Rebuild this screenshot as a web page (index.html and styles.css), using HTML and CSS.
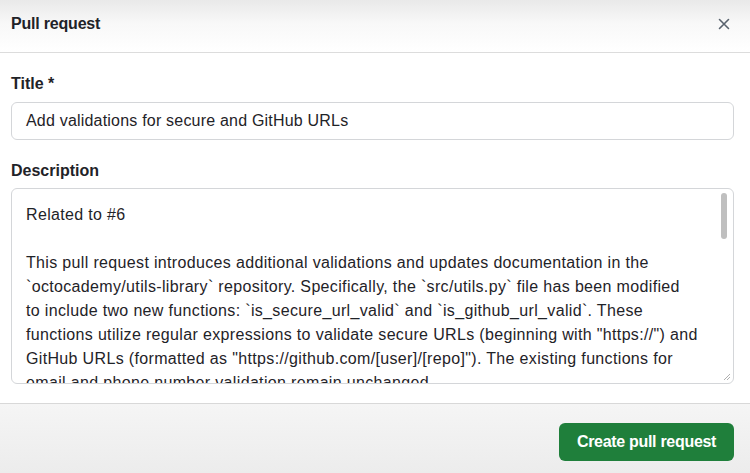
FILE: index.html
```html
<!DOCTYPE html>
<html lang="en">
<head>
    <meta charset="UTF-8">
    <title>Pull request</title>
    <link rel="stylesheet" href="styles.css">
</head>
<body>
    <div class="dialog">
        <div class="dialog-header">
            <h2>Pull request</h2>
            <button class="close" aria-label="Close">
                <svg width="16" height="16" viewBox="0 0 16 16"><path d="M3.5 3.5l9 9M12.5 3.5l-9 9" stroke="#59636e" stroke-width="1.6" stroke-linecap="round"/></svg>
            </button>
        </div>

        <div class="dialog-body">
            <label class="field-label">Title *</label>
            <div class="input">Add validations for secure and GitHub URLs</div>

            <label class="field-label desc-label">Description</label>
            <div class="textarea">
                <div class="textarea-text">Related to #6

This pull request introduces additional validations and updates documentation in the
`octocademy/utils-library` repository. Specifically, the `src/utils.py` file has been modified
to include two new functions: `is_secure_url_valid` and `is_github_url_valid`. These
functions utilize regular expressions to validate secure URLs (beginning with "https://") and
GitHub URLs (formatted as "https://github.com/[user]/[repo]"). The existing functions for
email and phone number validation remain unchanged.</div>
                <div class="scroll-thumb"></div>
                <svg class="grip" width="8" height="8" viewBox="0 0 8 8"><path d="M7 1L1 7M7 4L4 7" stroke="#b0b0b0" stroke-width="1"/></svg>
            </div>
        </div>

        <div class="dialog-footer">
            <button class="btn-primary">Create pull request</button>
        </div>
    </div>
</body>
</html>
```

FILE: styles.css
```css
* { margin: 0; padding: 0; box-sizing: border-box; }
body { font-family: "Liberation Sans", Arial, sans-serif; color: #1f2328; background: #fff; width: 750px; height: 473px; overflow: hidden; }
.dialog { display: flex; flex-direction: column; height: 473px; }
.dialog-header { height: 53px; display: flex; align-items: center; justify-content: space-between; padding: 0 18px 4px 11px; background: linear-gradient(180deg, #e9e9e9 0%, #f8f8f8 45%, #ffffff 100%); border-bottom: 1px solid #dcdcdc; }
.dialog-header h2 { font-size: 16px; font-weight: bold; letter-spacing: -0.2px; }
.close { background: none; border: none; display: flex; }
.dialog-body { padding: 19px 16px 0 11px; flex: 1; }
.field-label { display: block; font-size: 16px; font-weight: bold; line-height: 24px; margin-bottom: 6px; }
.desc-label { margin-top: 19px; margin-bottom: 5px; }
.input { height: 38px; border: 1px solid #d4d6d9; border-radius: 6px; padding: 0 14px; font-size: 16px; line-height: 36px; letter-spacing: 0.2px; }
.textarea { position: relative; height: 196px; border: 1px solid #d4d6d9; border-radius: 6px; overflow: hidden; padding: 14px 14px 0; }
.textarea-text { white-space: pre-line; font-size: 16px; line-height: 24px; letter-spacing: 0.34px; }
.scroll-thumb { position: absolute; top: 4px; right: 6px; width: 6px; height: 46px; border-radius: 3px; background: #bfbfbf; }
.grip { position: absolute; right: 2px; bottom: 2px; }
.dialog-footer { height: 70px; display: flex; justify-content: flex-end; align-items: flex-start; padding: 19px 16px 0; border-top: 1px solid #d8d8d8; background: linear-gradient(180deg, #f5f5f5 0%, #ececec 100%); }
.btn-primary { height: 38px; width: 175px; border: none; border-radius: 6px; background: #1f7f3b; color: #fff; font-family: inherit; font-size: 16px; font-weight: bold; letter-spacing: -0.3px; }
```
